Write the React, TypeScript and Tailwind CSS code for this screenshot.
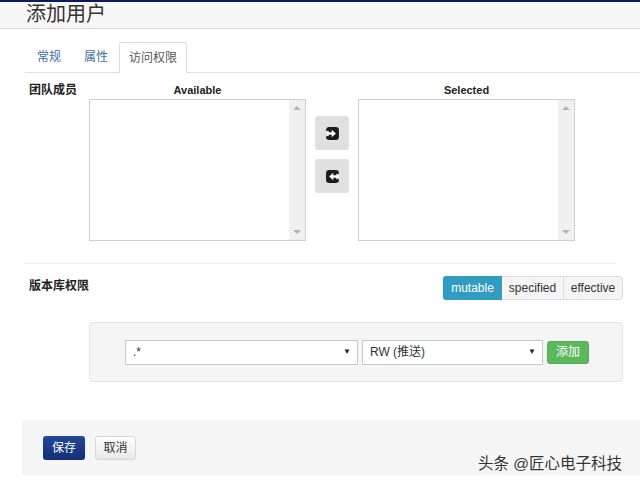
import React from "react";

const FONT = { fontFamily: '"Liberation Sans", "Noto Sans CJK SC", sans-serif' };

function ListBox() {
  return (
    <div className="flex h-[142px] w-[217px] border border-[#cfcfcf] bg-white">
      <div className="flex-1" />
      <div className="flex w-[16px] flex-col items-center justify-between bg-[#f0f0f0] py-[6px]">
        <span className="h-0 w-0 border-x-[4px] border-b-[4px] border-x-transparent border-b-[#b5b5b5]" />
        <span className="h-0 w-0 border-x-[4px] border-t-[4px] border-x-transparent border-t-[#b5b5b5]" />
      </div>
    </div>
  );
}

function MoveIcon({ dir }: { dir: "in" | "out" }) {
  return (
    <svg width="15" height="15" viewBox="0 0 14 14">
      <rect x="1" y="1" width="12" height="12" rx="3" fill="#1b1b1b" />
      {dir === "in" ? (
        <>
          <rect x="0" y="4.5" width="3.5" height="5" fill="#dfdfdf" />
          <path d="M1.5 5.8h4.8V3.4L10.2 7l-3.9 3.6V8.2H1.5z" fill="#fff" />
        </>
      ) : (
        <>
          <rect x="10.5" y="4.5" width="3.5" height="5" fill="#dfdfdf" />
          <path d="M12.5 5.8H7.7V3.4L3.8 7l3.9 3.6V8.2h4.8z" fill="#fff" />
        </>
      )}
    </svg>
  );
}

function Select({ value, width }: { value: string; width: string }) {
  return (
    <div className={`flex h-[25px] ${width} items-center justify-between border border-[#c8c8c8] bg-white pl-[7px] pr-[6px] text-[12px] text-[#333]`}>
      <span>{value}</span>
      <span className="text-[8px] text-[#222]">▼</span>
    </div>
  );
}

export default function App() {
  return (
    <div className="relative h-[486px] w-[640px] overflow-hidden bg-white" style={FONT}>
      <div className="h-[2px] bg-[#0c1a5c]" />
      <div className="h-[27px] border-b border-[#d9d9d9] bg-[#f7f7f7] pl-[26px]">
        <h1 className="text-[20px] leading-[24px] text-[#333]">添加用户</h1>
      </div>

      <div className="mt-[13px] ml-[25px] flex h-[31px] items-end border-b border-[#dddddd] text-[12px]">
        <span className="mb-[6px] ml-[12px] text-[#3d6fa8]">常规</span>
        <span className="mb-[6px] ml-[23px] text-[#3d6fa8]">属性</span>
        <span className="ml-[11px] -mb-px flex h-[31px] items-center rounded-t-[3px] border border-b-white border-[#dddddd] bg-white px-[9px] text-[#555]">
          访问权限
        </span>
      </div>

      <div className="mt-[8px] flex">
        <div className="w-[89px] pl-[29px] text-[12px] font-bold text-[#222]">团队成员</div>
        <div className="flex flex-col">
          <div className="h-[18px] text-center text-[11px] font-bold leading-[18px] text-[#222]">Available</div>
          <ListBox />
        </div>
        <div className="mx-[9px] mt-[35px] flex flex-col gap-[9px]">
          <div className="flex h-[34px] w-[34px] items-center justify-center rounded-[3px] bg-[#e0e0e0]">
            <MoveIcon dir="in" />
          </div>
          <div className="flex h-[34px] w-[34px] items-center justify-center rounded-[3px] bg-[#e0e0e0]">
            <MoveIcon dir="out" />
          </div>
        </div>
        <div className="flex flex-col">
          <div className="h-[18px] text-center text-[11px] font-bold leading-[18px] text-[#222]">Selected</div>
          <ListBox />
        </div>
      </div>

      <div className="mx-[23px] mt-[22px] border-t border-[#eeeeee]" />

      <div className="mt-[12px] flex items-start justify-between pr-[17px]">
        <div className="pl-[29px] pt-[1px] text-[12px] font-bold text-[#222]">版本库权限</div>
        <div className="flex h-[24px] text-[12px]">
          <span className="flex w-[59px] items-center justify-center rounded-l-[3px] bg-[#2f9cc0] text-white">mutable</span>
          <span className="flex w-[61px] items-center justify-center border-y border-[#dcdcdc] bg-[#f4f4f4] text-[#333]">specified</span>
          <span className="flex w-[60px] items-center justify-center rounded-r-[3px] border border-[#dcdcdc] bg-[#f4f4f4] text-[#333]">effective</span>
        </div>
      </div>

      <div className="mt-[22px] ml-[89px] mr-[17px] flex h-[60px] items-center gap-[4px] rounded-[4px] border border-[#e3e3e3] bg-[#f5f5f5] pl-[35px]">
        <Select value=".*" width="w-[233px]" />
        <Select value="RW (推送)" width="w-[181px]" />
        <span className="flex h-[23px] w-[42px] items-center justify-center rounded-[3px] border border-[#4cae4c] bg-[#5cb85c] text-[12px] text-white">
          添加
        </span>
      </div>

      <div className="mt-[38px] ml-[22px] flex h-[55px] items-center gap-[10px] bg-[#f5f5f5] pl-[21px]">
        <span className="flex h-[24px] w-[42px] items-center justify-center rounded-[3px] bg-gradient-to-b from-[#24479a] to-[#122f75] text-[12px] text-white">
          保存
        </span>
        <span className="flex h-[24px] w-[41px] items-center justify-center rounded-[3px] border border-[#d5d5d5] bg-gradient-to-b from-white to-[#e8e8e8] text-[12px] text-[#333]">
          取消
        </span>
      </div>

      <div className="absolute left-[478px] top-[452px] text-[15.5px] text-[#333] [text-shadow:0_0_2px_#fff]">
        头条 @匠心电子科技
      </div>
    </div>
  );
}
